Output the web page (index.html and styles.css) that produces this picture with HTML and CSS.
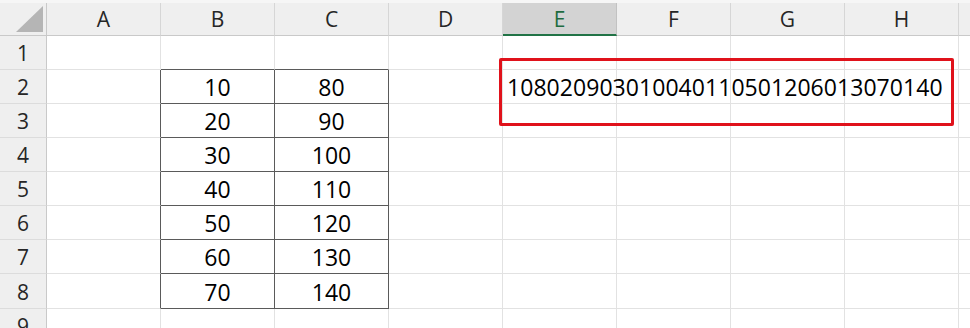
FILE: index.html
```html
<!DOCTYPE html>
<html>
<head>
<meta charset="utf-8">
<link rel="stylesheet" href="styles.css">
</head>
<body>
<div class="sheet">
  <div class="strip"></div>
  <div class="grid">
    <div class="corner"><svg width="28" height="27" viewBox="0 0 28 27"><polygon points="27,0 27,26 0,26" fill="#b5b5b5"/></svg></div>
    <div class="ch">A</div><div class="ch">B</div><div class="ch">C</div><div class="ch">D</div>
    <div class="ch sel">E</div><div class="ch">F</div><div class="ch">G</div><div class="ch">H</div><div class="ch last"></div>

    <div class="rh">1</div><div class="c"></div><div class="c top"></div><div class="c top"></div><div class="c"></div><div class="c"></div><div class="c"></div><div class="c"></div><div class="c"></div><div class="c last"></div>

    <div class="rh">2</div><div class="c edge"></div><div class="c t">10</div><div class="c t">80</div><div class="c"></div>
    <div class="c e2">108020903010040110501206013070140</div><div class="c"></div><div class="c"></div><div class="c"></div><div class="c last"></div>

    <div class="rh">3</div><div class="c edge"></div><div class="c t">20</div><div class="c t">90</div><div class="c"></div><div class="c"></div><div class="c"></div><div class="c"></div><div class="c"></div><div class="c last"></div>
    <div class="rh">4</div><div class="c edge"></div><div class="c t">30</div><div class="c t">100</div><div class="c"></div><div class="c"></div><div class="c"></div><div class="c"></div><div class="c"></div><div class="c last"></div>
    <div class="rh">5</div><div class="c edge"></div><div class="c t">40</div><div class="c t">110</div><div class="c"></div><div class="c"></div><div class="c"></div><div class="c"></div><div class="c"></div><div class="c last"></div>
    <div class="rh">6</div><div class="c edge"></div><div class="c t">50</div><div class="c t">120</div><div class="c"></div><div class="c"></div><div class="c"></div><div class="c"></div><div class="c"></div><div class="c last"></div>
    <div class="rh">7</div><div class="c edge"></div><div class="c t">60</div><div class="c t">130</div><div class="c"></div><div class="c"></div><div class="c"></div><div class="c"></div><div class="c"></div><div class="c last"></div>
    <div class="rh">8</div><div class="c edge"></div><div class="c t">70</div><div class="c t">140</div><div class="c"></div><div class="c"></div><div class="c"></div><div class="c"></div><div class="c"></div><div class="c last"></div>
    <div class="rh">9</div><div class="c"></div><div class="c"></div><div class="c"></div><div class="c"></div><div class="c"></div><div class="c"></div><div class="c"></div><div class="c"></div><div class="c last"></div>
  </div>
  <div class="highlight"></div>
</div>
</body>
</html>
```

FILE: styles.css
```css
* { box-sizing: border-box; }
html, body { margin: 0; padding: 0; background: #fff; }
body { width: 970px; height: 328px; overflow: hidden; font-family: "Open Sans", "Noto Sans", sans-serif; }
.sheet { position: relative; width: 970px; height: 328px; overflow: hidden; }
.strip { height: 3px; background: #f6f6f6; }
.grid {
  display: grid;
  grid-template-columns: 47px repeat(8, 114px) 1fr;
  grid-template-rows: 33px repeat(7, 34px) 35px 34px 34px;
}
.corner {
  background: #efefef;
  border-right: 1px solid #c9c9c9;
  border-bottom: 1px solid #c9c9c9;
  display: flex; align-items: flex-end; justify-content: flex-end;
  padding: 0 2px 2px 0;
}
.corner svg { display: block; }
.ch {
  background: #efefef;
  border-right: 1px solid #d6d6d6;
  border-bottom: 1px solid #c9c9c9;
  display: flex; align-items: center; justify-content: center;
  font-size: 21px; color: #262626;
}
.ch.sel { background: #d3d3d3; color: #1e6b40; border-bottom: 2px solid #217346; border-right-color: #c2c2c2; }
.ch.last { border-right: none; }
.rh {
  background: #efefef;
  border-right: 1px solid #c9c9c9;
  border-bottom: 1px solid #dcdcdc;
  display: flex; align-items: center; justify-content: center;
  font-size: 21px; color: #262626;
  padding-top: 1px;
}
.c {
  border-right: 1px solid #e2e2e2;
  border-bottom: 1px solid #e2e2e2;
  font-size: 23px; color: #000;
  display: flex; align-items: center;
}
.c.last { border-right: none; }
.c.top { border-bottom-color: #5a5a5a; }
.c.edge { border-right-color: #5a5a5a; }
.c.t {
  border-right-color: #5a5a5a;
  border-bottom-color: #5a5a5a;
  justify-content: center;
  padding-top: 1px;
}
.c.e2 { white-space: nowrap; overflow: visible; padding-left: 4px; padding-top: 1px; position: relative; z-index: 1; letter-spacing: 0.05px; }
.highlight {
  position: absolute;
  left: 499px; top: 58px;
  width: 455px; height: 68px;
  border: 3px solid #e0121b;
  border-radius: 2px;
}
```
